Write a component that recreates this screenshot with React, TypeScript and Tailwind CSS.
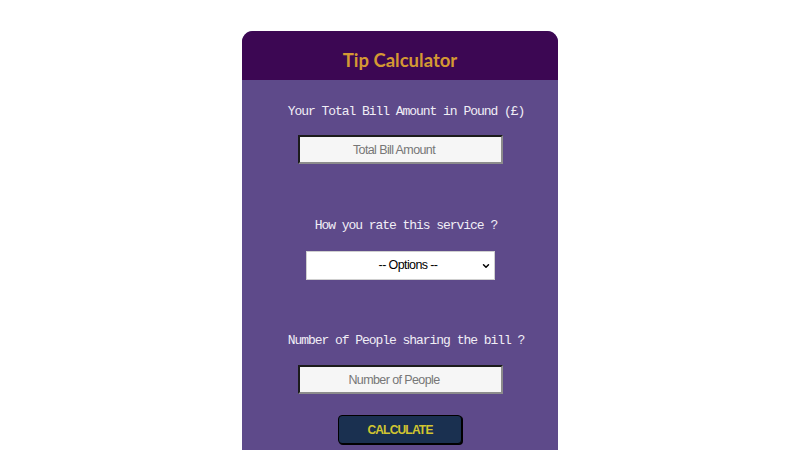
import { ChevronDown } from "lucide-react";

const labelCls =
  "pl-3 text-center text-[13px] tracking-[-1.05px] leading-4 text-[#f1eef6] [font-family:'Liberation_Mono',monospace]";

const inputCls =
  "block w-[205px] h-[29px] mx-auto pr-3 bg-[#f6f6f6] border-2 border-t-[#1c1c1c] border-l-[#1c1c1c] border-b-[#8c8c8c] border-r-[#8c8c8c] text-center text-[12.5px] tracking-[-0.6px] text-[#333] placeholder:text-[#777] outline-none [font-family:'Liberation_Sans',Arial,sans-serif]";

export default function App() {
  return (
    <div className="min-h-screen bg-white flex justify-center pt-[31px]">
      <div className="w-[316px] h-[419px] rounded-t-[11px] overflow-hidden bg-[#5e4a8a]">
        <div className="h-[49px] bg-[#3c0753] flex items-center justify-center pt-[10px]">
          <h1 className="text-[18.5px] font-bold text-[#d49933] [font-family:Lato,'Open_Sans',sans-serif]">
            Tip Calculator
          </h1>
        </div>

        <div className="pt-[24px]">
          <p className={labelCls}>Your Total Bill Amount in Pound (£)</p>
          <input className={`${inputCls} mt-[15px]`} placeholder="Total Bill Amount" />

          <p className={`${labelCls} mt-[54px]`}>How you rate this service ?</p>
          <div className="relative w-[189px] mx-auto mt-[17px]">
            <select
              defaultValue=""
              className="block w-full h-[29px] appearance-none bg-white border border-[#cfcfcf] pl-4 text-center text-[12.5px] tracking-[-0.6px] text-black outline-none [font-family:'Liberation_Sans',Arial,sans-serif]"
            >
              <option value="">-- Options --</option>
              <option value="0.3">30% - Outstanding</option>
              <option value="0.2">20% - Good</option>
              <option value="0.15">15% - It was OK</option>
              <option value="0.1">10% - Bad</option>
              <option value="0.05">5% - Terrible</option>
            </select>
            <ChevronDown
              size={10}
              strokeWidth={3.5}
              className="absolute right-[4px] top-[10px] text-black pointer-events-none"
            />
          </div>

          <p className={`${labelCls} mt-[53px]`}>Number of People sharing the bill ?</p>
          <input className={`${inputCls} mt-[16px]`} placeholder="Number of People" />

          <button className="block mx-auto mt-[21px] w-[124px] h-[29px] rounded-[4px] bg-[#1a3050] border border-black shadow-[1px_1px_0_#000] text-[12px] tracking-[-0.8px] font-bold text-[#d2c530] [font-family:'Liberation_Sans',Arial,sans-serif]">
            CALCULATE
          </button>
        </div>
      </div>
    </div>
  );
}
